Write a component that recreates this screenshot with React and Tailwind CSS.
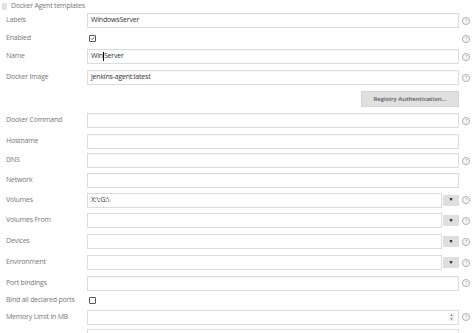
import React from 'react';

const font = { fontFamily: '"Open Sans", "Noto Sans", sans-serif' };

const HelpIcon = () => (
  <span className="flex items-center justify-center w-[8px] h-[8px] rounded-full border border-[#aaa] text-[6px] leading-none text-[#999]">?</span>
);

const Row = ({ label, height, help, children }) => (
  <div className={`flex items-center ${height}`}>
    <div className="w-[81px] text-[7px] tracking-[-0.2px] text-[#777] whitespace-nowrap">{label}</div>
    <div className="flex items-center w-[372px]">{children}</div>
    <div className="flex w-[15px] pl-[3px]">{help && <HelpIcon />}</div>
  </div>
);

const TextInput = ({ children }) => (
  <div className="flex items-center w-full h-[15px] border border-[#dcdcdc] bg-white pl-[3px] text-[7px] tracking-[-0.2px] text-[#333] shadow-[inset_0_1px_1px_rgba(0,0,0,0.04)]">
    {children}
  </div>
);

const SelectInput = ({ value }) => (
  <div className="flex items-center w-full gap-[1px]">
    <div className="flex items-center flex-1 h-[15px] border border-[#dcdcdc] bg-white pl-[3px] text-[7px] tracking-[-0.2px] text-[#333]">{value}</div>
    <div className="flex items-center justify-center w-[16px] h-[11px] bg-[#dedede] text-[5px] text-black">▼</div>
  </div>
);

const Checkbox = ({ checked }) => (
  <div className="flex items-center justify-center w-[7px] h-[7px] ml-[2px] border border-[#555] rounded-[1px] bg-white">
    {checked && (
      <svg width="5" height="5" viewBox="0 0 10 10">
        <path d="M2 5 L4.2 7.2 L8.5 2.5" stroke="#333" strokeWidth="1.6" fill="none" />
      </svg>
    )}
  </div>
);

const textRows = [
  { label: 'Docker Command', height: 'h-[21px]', help: true },
  { label: 'Hostname', height: 'h-[20px]', help: false },
  { label: 'DNS', height: 'h-[19px]', help: true },
  { label: 'Network', height: 'h-[20px]', help: false },
];

const selectRows = [
  { label: 'Volumes', height: 'h-[20px]', value: 'X:\\:G:\\' },
  { label: 'Volumes From', height: 'h-[21px]', value: '' },
  { label: 'Devices', height: 'h-[21px]', value: '' },
  { label: 'Environment', height: 'h-[21px]', value: '' },
];

export default function App() {
  return (
    <div className="w-[474px] h-[333px] overflow-hidden bg-white pl-[6px]" style={font}>
      {/* Section header */}
      <div className="flex items-center h-[10px] -ml-[4px] pt-[3px] gap-[4px]">
        <span className="w-[5px] h-[7px] bg-[#e2e2e2]" />
        <span className="text-[7px] tracking-[-0.2px] text-[#777]">Docker Agent templates</span>
      </div>

      <Row label="Labels" height="h-[21px]" help>
        <TextInput>WindowsServer</TextInput>
      </Row>
      <Row label="Enabled" height="h-[15px]" help>
        <Checkbox checked />
      </Row>
      <Row label="Name" height="h-[21px]" help>
        <TextInput>
          Win<span className="inline-block w-[1px] h-[9px] bg-black" />Server
        </TextInput>
      </Row>
      <Row label="Docker Image" height="h-[21px]" help>
        <TextInput>jenkins-agent:latest</TextInput>
      </Row>

      <div className="flex items-center justify-end h-[22px] w-[453px]">
        <div className="flex items-center justify-center w-[98px] h-[16px] bg-[#e0e0e0] border border-[#d4d4d4] text-[6px] font-semibold text-[#555]">
          Registry Authentication...
        </div>
      </div>

      {textRows.map((r) => (
        <Row key={r.label} label={r.label} height={r.height} help={r.help}>
          <TextInput />
        </Row>
      ))}

      {selectRows.map((r) => (
        <Row key={r.label} label={r.label} height={r.height} help>
          <SelectInput value={r.value} />
        </Row>
      ))}

      <Row label="Port bindings" height="h-[20px]" help>
        <TextInput />
      </Row>
      <Row label="Bind all declared ports" height="h-[15px]">
        <Checkbox />
      </Row>
      <Row label="Memory Limit in MB" height="h-[18px]" help>
        <div className="flex items-center justify-end w-full h-[15px] border border-[#dcdcdc] bg-white pr-[4px]">
          <div className="flex flex-col items-center justify-center w-[5px] h-[8px] bg-[#eee] text-[3px] leading-[4px] text-[#555]">
            <span>▲</span>
            <span>▼</span>
          </div>
        </div>
      </Row>
      <div className="flex items-start h-[21px] pt-[3px]">
        <div className="w-[81px]" />
        <div className="w-[372px] h-[15px] border border-[#dcdcdc] bg-white" />
      </div>
    </div>
  );
}
